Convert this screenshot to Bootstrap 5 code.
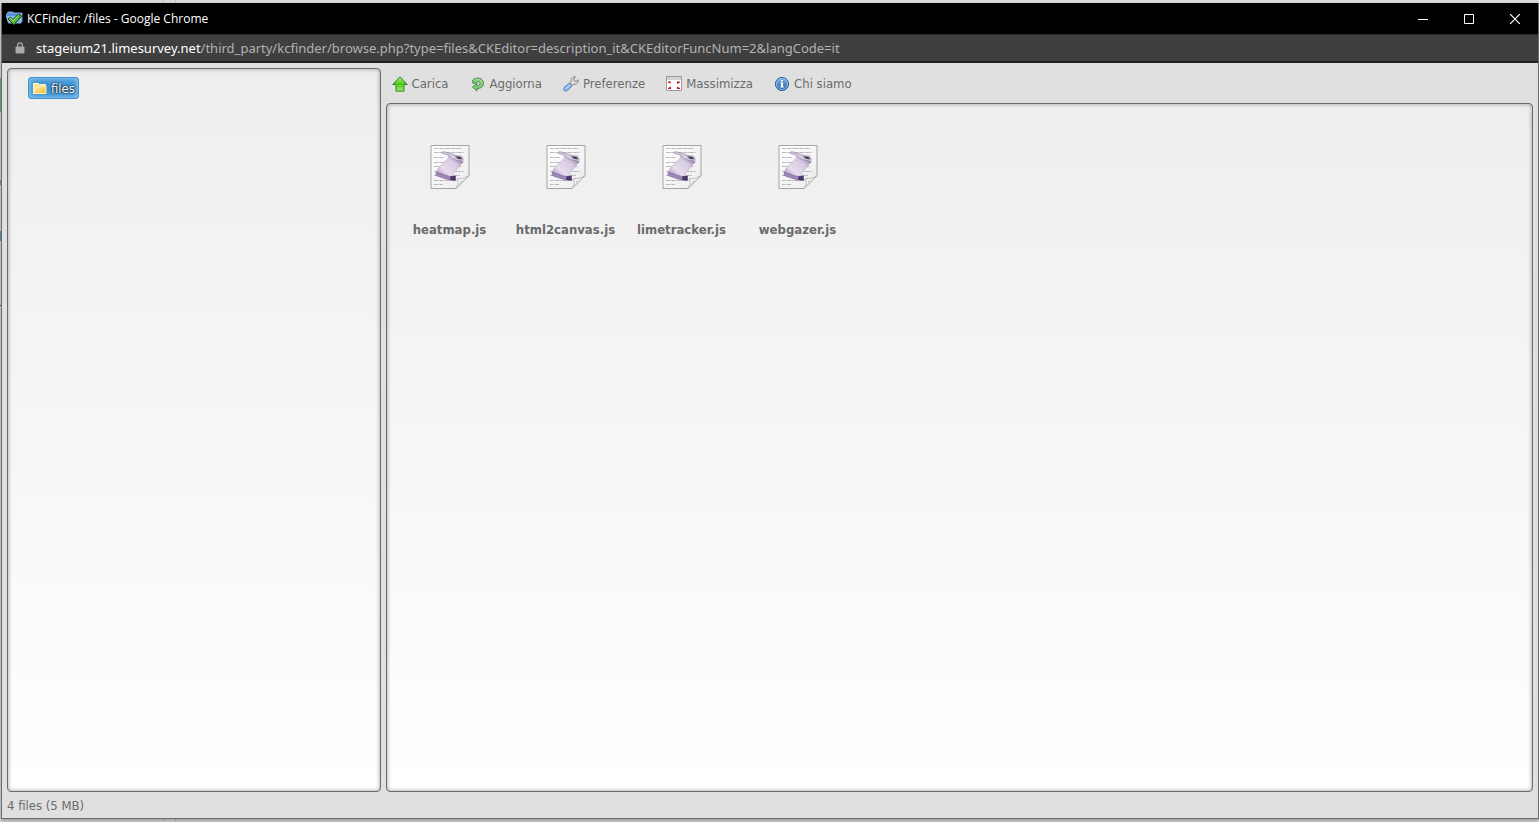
<!DOCTYPE html>
<html lang="it">
<head>
<meta charset="utf-8">
<meta name="viewport" content="width=device-width, initial-scale=1">
<title>KCFinder: /files</title>
<link rel="stylesheet" href="https://cdn.jsdelivr.net/npm/bootstrap@5.3.0/dist/css/bootstrap.min.css">
<style>
  body { background: linear-gradient(90deg, transparent 163px, #c0c0c0 163px 164px, #dcdcdc 164px 175px, #c0c0c0 175px 176px, transparent 176px), linear-gradient(transparent 78px, #76ad79 78px 112px, transparent 112px 180px, #7b9f7c 180px 185px, transparent 185px 231px, #5c93ac 231px 241px, transparent 241px 305px, #555 305px 306px, transparent 306px), #dadada; font-family: "DejaVu Sans Condensed", "DejaVu Sans", sans-serif; font-size: 13px; line-height: 16px; color: #6b6b6b; padding: 3px 0 3px 1px; }
  .app-window { background: #e0e0e0; border: 1px solid #6b6b6b; border-top: 0; box-shadow: 0 2px 4px rgba(0,0,0,.3); }
  .title-bar { background: #000; color: #fff; height: 31px; font-family: "Open Sans", "Noto Sans", sans-serif; font-size: 12px; padding-left: 4px; }
  .win-btn { width: 46px; height: 31px; background: none; border: 0; padding: 0; color: #fff; }
  .address-bar { background: #3f3f3f; height: 29px; border-top: 1px solid #2c2c2c; border-bottom: 2px solid #222; padding-left: 12px; font-family: "Noto Sans", sans-serif; font-size: 13px; color: #b2b2b2; gap: 10px; }
  .address-bar b { color: #fff; font-weight: 400; }
  .work-area { padding: 5px 5px 0; gap: 5px; }
  .folder-pane { width: calc(25% - 8px); padding: 8px 20px; }
  .pane { border: 1px solid #6b6b6b; border-radius: 4px; background: linear-gradient(#eee, #fff); box-shadow: inset 0 0 4px #999; }
  .folder-link { color: #fff; text-decoration: none; border: 1px solid #3c93d9; border-radius: 3px; background: #3c93d3; box-shadow: inset 0 0 6px #b5dcf5; padding: 3px 3px 1px; text-shadow: 0 0 2px #000, 0 0 1px #000; height: 22px; gap: 3px; }
  .tool-bar { height: 35px; padding: 0 6px 4px; gap: 21px; }
  .tool-link { color: #6b6b6b; text-decoration: none; gap: 4px; }
  .file-pane { padding: 10px 5px; }
  .file-tile { width: 106px; margin: 0 5px; padding-top: 30px; color: #6b6b6b; font-weight: 700; text-decoration: none; text-align: center; }
  .file-tile svg { margin-bottom: 32px; }
  .status-line { padding: 6px 5px 4px; }
</style>
</head>
<body class="vh-100">
<svg width="0" height="0" class="position-absolute" aria-hidden="true">
  <defs>
    <linearGradient id="gScroll" x1="0" y1=".9" x2=".9" y2="0"><stop offset="0" stop-color="#a48dbb"/><stop offset=".3" stop-color="#e6ddee"/><stop offset=".7" stop-color="#d5c9e0"/><stop offset="1" stop-color="#75648a"/></linearGradient>
    <linearGradient id="gPage" x1="0" y1="0" x2="1" y2="1"><stop offset="0" stop-color="#fff"/><stop offset="1" stop-color="#ebebeb"/></linearGradient>
    <linearGradient id="gGreen" x1="0" y1="0" x2="0" y2="1"><stop offset="0" stop-color="#b3f07c"/><stop offset=".5" stop-color="#48c814"/><stop offset="1" stop-color="#a2ea74"/></linearGradient>
    <linearGradient id="gFolder" x1="0" y1="0" x2="1" y2="1"><stop offset="0" stop-color="#fff3ba"/><stop offset="1" stop-color="#edb92e"/></linearGradient>
    <linearGradient id="gInfo" x1="0" y1="0" x2="0" y2="1"><stop offset="0" stop-color="#7fb0df"/><stop offset="1" stop-color="#2762a8"/></linearGradient>
    <symbol id="scriptFile" viewBox="0 0 40 46">
      <path d="M1 1.500h38v30l-13 13H1z" fill="url(#gPage)" stroke="#a5a5a5"/>
      <g stroke="#b8b8b8" stroke-width="1" stroke-dasharray="3 .5 2 .5">
        <path d="M4 4.500h28M4 8.500h30M4 13.500h10M4 18.500h30M4 22.500h28M4 27.500h30M4 31.500h26M4 36.500h22M4 40.500h9"/>
      </g>
      <path d="M18 11l13 2c2 1 2 4 1 6l-8 10c-1 1-1 3-.5 5-6 0-11-4-17-5 0-2 1-4 3-6l7-7c2-2 2.500-3 1.500-5z" fill="url(#gScroll)" stroke="#9b8bac" stroke-width=".4"/>
      <path d="M12 9c0-1.500 2-1.500 4-.8l10 3.300c3 .8 6-.5 6.500 2 .8 2 .5 4-.5 5.500 0-3-3-3-6-3-3 0-6-3-8-5-2-1-4-.5-6-2z" fill="#d6cce0" stroke="#8c7b9e" stroke-width=".6"/>
      <path d="M25 12c3 1.500 6-1 7 3.500-3-.5-5-.5-7-3.500z" fill="#433a52"/>
      <path d="M6 28.500c6 .5 11 4.500 17 4l1.500 4c-7 0-13-3.500-17.500-4.500-1-.5-1-2-1-3.500z" fill="#9e87b5" stroke="#735891" stroke-width=".5"/>
      <path d="M20 32.500l6.500-1c-1.500 1.500-1 3 0 5l-6-.5z" fill="#4b376a"/>
      <path d="M26 44.500c2-3 3-6 1.500-10 4 1 8-1 11.500-3z" fill="#fafafa" stroke="#aaa" stroke-width=".8"/>
      <path d="M28 42c2-2 2-4 2-5 2 0 4-1 6-2z" fill="#ccc"/>
    </symbol>
  </defs>
</svg>
<div class="app-window h-100 d-flex flex-column">
  <header class="title-bar d-flex align-items-center flex-shrink-0">
    <svg width="17" height="16" viewBox="0 0 17 16" class="flex-shrink-0"><path d="M1 3l1-2h5l1 1h8v9H2L0 4z" fill="#5594dc" stroke="#a3ccf6" stroke-width=".7"/><path d="M2.500 12.500L.5 5h15l-.5 7.500z" fill="#86b9f1"/><path d="M2 8l2.500-2L7 8.500 12.500 3 15.500 5 8 14z" fill="#55b930" stroke="#17460e"/><path d="M3.500 8l1-.8L7 10l5.500-5.500" fill="none" stroke="#a5e481"/></svg>
    <span class="ms-1 text-nowrap">KCFinder: /files - Google Chrome</span>
    <div class="ms-auto d-flex">
      <button class="win-btn" type="button" aria-label="Riduci a icona"><svg width="10" height="10" viewBox="0 0 10 10"><path d="M0 5.500h10" stroke="#fff"/></svg></button>
      <button class="win-btn" type="button" aria-label="Ingrandisci"><svg width="10" height="10" viewBox="0 0 10 10"><path d="M.5.5h9v9h-9z" fill="none" stroke="#fff"/></svg></button>
      <button class="win-btn" type="button" aria-label="Chiudi"><svg width="10" height="10" viewBox="0 0 10 10"><path d="M0 0l10 10M10 0L0 10" stroke="#fff" stroke-width="1.200"/></svg></button>
    </div>
  </header>
  <div class="address-bar d-flex align-items-center flex-shrink-0">
    <svg width="12" height="12" viewBox="0 0 12 12" class="flex-shrink-0"><path d="M2 5h8v6H2z" fill="#a9abad" stroke="#a9abad" stroke-linejoin="round"/><path d="M3.700 5V3.200a2.300 2.300 0 0 1 4.600 0V5" fill="none" stroke="#a9abad" stroke-width="1.300"/></svg>
    <span class="text-nowrap"><b>stageium21.limesurvey.net</b>/third_party/kcfinder/browse.php?type=files&amp;CKEditor=description_it&amp;CKEditorFuncNum=2&amp;langCode=it</span>
  </div>
  <main class="work-area d-flex flex-grow-1">
    <nav class="folder-pane pane flex-shrink-0" aria-label="Cartelle">
      <a href="#" class="folder-link d-inline-flex align-items-center"><svg width="16" height="16" viewBox="0 0 16 16"><path d="M1.500 2.500h5l1 1h6v9h-12z" fill="#fbe49a" stroke="#fff2c4"/><path d="M1.500 12.500l1.500-6h4l1-1h6v7z" fill="url(#gFolder)" stroke="#fff0b5"/></svg>files</a>
    </nav>
    <section class="d-flex flex-column flex-grow-1">
      <div class="tool-bar d-flex align-items-center flex-shrink-0">
        <a href="#" class="tool-link d-flex align-items-center"><svg width="16" height="16" viewBox="0 0 16 16"><path d="M8 .8l7.300 7.700H12v6.700H4V8.500H.7z" fill="url(#gGreen)" stroke="#42852c" stroke-linejoin="round"/></svg>Carica</a>
        <a href="#" class="tool-link d-flex align-items-center"><svg width="16" height="16" viewBox="0 0 16 16"><path d="M2.500 4.500C5 .8 13.500 1 13.500 7.500c0 3.500-3 5-6.500 5V15L2.500 11 7 7.500v2c2 0 3-.6 3-2C10 5.500 7.500 5 6.500 7L3 7.500z" fill="#84c77e" stroke="#3e9044" stroke-linejoin="round"/><path d="M5 4c3-2 7-.5 7 3.500" fill="none" stroke="#b5e3ad"/></svg>Aggiorna</a>
        <a href="#" class="tool-link d-flex align-items-center"><svg width="16" height="16" viewBox="0 0 16 16"><path d="M8 6.500c-.6-3 1-5.500 4.500-5.800L10.800 3l.5 2 1.800.4 2.200-1.600c0 3.200-2.300 5-5 4.500L8.500 10 6.600 8z" fill="#ddd" stroke="#858585"/><path d="M6.500 7l2.700 2.700-4.800 5C2 16-.3 13.800 1 11.600z" fill="#91b6ed" stroke="#5680c8"/><path d="M3 12.500L6.500 9" stroke="#d3e4ff"/></svg>Preferenze</a>
        <a href="#" class="tool-link d-flex align-items-center"><svg width="16" height="16" viewBox="0 0 16 16"><path d="M.5.500h15v14H.5z" fill="#fff" stroke="#9b9b9b"/><path d="M1 1h14v3H1z" fill="#d2d2d2"/><path d="M2 5.500h3v1H4l1 1.500-3-1.500zM14 5.500h-3V8l3-1.500zM2 13h3v-2.500L2 12zM14 13h-3v-2.500l3 1.500z" fill="#c21c1c"/></svg>Massimizza</a>
        <a href="#" class="tool-link d-flex align-items-center"><svg width="16" height="16" viewBox="0 0 16 16"><circle cx="8" cy="8" r="6.600" fill="url(#gInfo)" stroke="#2e629f"/><circle cx="8" cy="8" r="5.500" fill="none" stroke="#a6caee" stroke-width=".8"/><path d="M7 4h2v1.600H7zM6.500 6.500H9v4h.8v1H6.300v-1H7v-3h-.5z" fill="#fff"/></svg>Chi siamo</a>
      </div>
      <div class="file-pane pane flex-grow-1 d-flex flex-wrap align-content-start">
        <a href="#" class="file-tile"><svg width="40" height="46"><use href="#scriptFile"/></svg><div>heatmap.js</div></a>
        <a href="#" class="file-tile"><svg width="40" height="46"><use href="#scriptFile"/></svg><div>html2canvas.js</div></a>
        <a href="#" class="file-tile"><svg width="40" height="46"><use href="#scriptFile"/></svg><div>limetracker.js</div></a>
        <a href="#" class="file-tile"><svg width="40" height="46"><use href="#scriptFile"/></svg><div>webgazer.js</div></a>
      </div>
    </section>
  </main>
  <footer class="status-line">4 files (5 MB)</footer>
</div>
<script src="https://cdn.jsdelivr.net/npm/bootstrap@5.3.0/dist/js/bootstrap.bundle.min.js"></script>
</body>
</html>
